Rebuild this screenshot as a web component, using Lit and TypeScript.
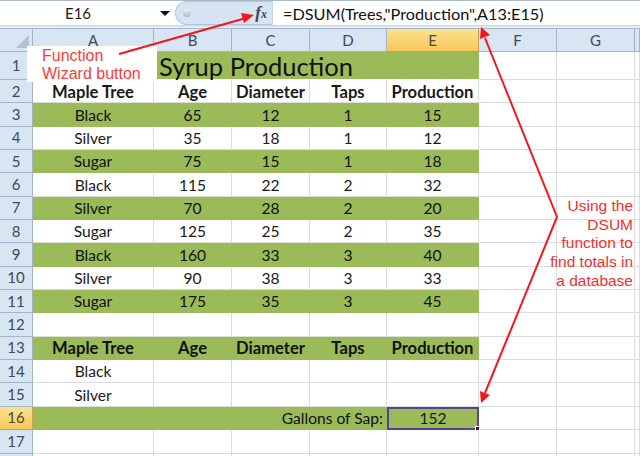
import { LitElement, html, css } from "lit";
import { customElement } from "lit/decorators.js";

const COLS = ["A", "B", "C", "D", "E", "F", "G", ""];
const DATA: string[][] = [
  ["Black", "65", "12", "1", "15"],
  ["Silver", "35", "18", "1", "12"],
  ["Sugar", "75", "15", "1", "18"],
  ["Black", "115", "22", "2", "32"],
  ["Silver", "70", "28", "2", "20"],
  ["Sugar", "125", "25", "2", "35"],
  ["Black", "160", "33", "3", "40"],
  ["Silver", "90", "38", "3", "33"],
  ["Sugar", "175", "35", "3", "45"],
];
const HEAD = ["Maple Tree", "Age", "Diameter", "Taps", "Production"];

@customElement("app-root")
export class AppRoot extends LitElement {
  static styles = css`
    :host { display: block; width: 640px; height: 456px; overflow: hidden; position: relative; background: #fff; font-family: Lato, "Open Sans", sans-serif; color: #1a1a1a; }
    .bar { display: flex; height: 25px; border-top: 1px solid #a9b8cc; box-sizing: border-box; background: #fff; }
    .name { width: 175px; display: flex; align-items: center; position: relative; box-sizing: border-box; padding-left: 65px; font-size: 15px; }
    .caret { position: absolute; left: 160px; top: 10px; width: 0; height: 0; border: 5px solid transparent; border-top: 5px solid #111; border-bottom: 0; }
    .fxwrap { width: 98px; background: #d7e4f2; border-radius: 12px 0 0 12px; border: 1px solid #b6c6da; border-right: 1px solid #c5d2e2; box-sizing: border-box; display: flex; align-items: center; justify-content: space-between; padding: 0 5px 0 7px; }
    .knob { width: 8px; height: 8px; border-radius: 50%; background: linear-gradient(#eef3f8, #aab6c4); }
    .fx { font: italic bold 17px "Liberation Serif", serif; color: #3c4654; }
    .fx b { font-size: 12px; }
    .formula { flex: 1; font-size: 16.25px; padding-left: 10px; display: flex; align-items: center; color: #111; white-space: nowrap; }
    .gap { height: 4px; background: #e2ebf5; border-top: 1px solid #c9d6e6; border-bottom: 1px solid #a9b8cc; box-sizing: border-box; }
    .grid { display: grid; grid-template-columns: 33px 121px 78px 78px 77px 92px 78px 78px 5px; grid-template-rows: 23px 28px repeat(17, 23.35px); font-size: 15.6px; }
    .c { display: flex; align-items: center; justify-content: center; box-sizing: border-box; border-right: 1px solid #dcdcdc; border-bottom: 1px solid #dcdcdc; white-space: nowrap; min-width: 0; }
    .hd { background: #d8e5f3; border-right: 1px solid #a3b4ca; border-bottom: 1px solid #a3b4ca; color: #3c4a5c; font-size: 15px; line-height: 1; }
    .sel { background: linear-gradient(#fbe28f, #f8c858); border-right-color: #c7a04a; border-bottom-color: #c7a04a; color: #4a4a3a; }
    .corner { position: relative; }
    .tri { position: absolute; right: 3px; bottom: 3px; width: 0; height: 0; border-left: 13px solid transparent; border-bottom: 13px solid #b4c2d2; }
    .g { background: #9bbb59; border-right-color: #9bbb59; border-bottom-color: #9bbb59; color: #111; }
    .b { font-weight: 700; font-size: 16.6px; padding-top: 1px; }
    .title { grid-column: 2 / 7; background: #9bbb59; font-size: 25.5px; color: #111; border-right: 0; border-bottom: 1px solid #fff; }
    .sum { grid-column: 3 / 6; justify-content: flex-end; padding-right: 3px; }
    .total { border: 2px solid #5b3f94; position: relative; background: #9bbb59; }
    .handle { position: absolute; right: -3px; bottom: -3px; width: 5px; height: 5px; background: #222; border: 1px solid #fff; box-sizing: border-box; }
    .callout { position: absolute; left: 27px; top: 46px; width: 130px; height: 36px; background: #fff; color: #fb3b3b; font: 16px/18px "Liberation Sans", sans-serif; box-sizing: border-box; padding: 1px 0 0 15px; }
    .callout span { display: block; }
    .note { position: absolute; left: 530px; top: 197px; width: 103px; color: #f03030; font: 15.5px/18.7px "Liberation Sans", sans-serif; text-align: right; }
    svg.arrows { position: absolute; left: 0; top: 0; width: 640px; height: 456px; pointer-events: none; }
  `;

  private headRow(n: number) {
    return html`<div class="c hd">${n}</div>`;
  }

  render() {
    const blank = html`<div class="c"></div><div class="c"></div><div class="c"></div>`;
    const empties = html`<div class="c"></div><div class="c"></div><div class="c"></div><div class="c"></div>`;
    return html`
      <div class="bar">
        <div class="name">E16<i class="caret"></i></div>
        <div class="fxwrap"><i class="knob"></i><span class="fx">f<b>x</b></span></div>
        <div class="formula">=DSUM(Trees,"Production",A13:E15)</div>
      </div>
      <div class="gap"></div>
      <div class="grid">
        <div class="c hd corner"><i class="tri"></i></div>
        ${COLS.map((c) => html`<div class="c hd ${c === "E" ? "sel" : ""}">${c}</div>`)}
        ${this.headRow(1)}<div class="c title">Syrup Production</div>${blank}
        ${this.headRow(2)}${HEAD.map((h) => html`<div class="c b">${h}</div>`)}${blank}
        ${DATA.map((r, i) => html`${this.headRow(i + 3)}${r.map((v) => html`<div class="c ${i % 2 === 0 ? "g" : ""}">${v}</div>`)}${blank}`)}
        ${this.headRow(12)}<div class="c"></div>${empties}${blank}
        ${this.headRow(13)}${HEAD.map((h) => html`<div class="c b g">${h}</div>`)}${blank}
        ${this.headRow(14)}<div class="c">Black</div>${empties}${blank}
        ${this.headRow(15)}<div class="c">Silver</div>${empties}${blank}
        <div class="c hd sel">16</div><div class="c g"></div><div class="c g sum">Gallons of Sap:</div><div class="c total">152<i class="handle"></i></div>${blank}
        ${this.headRow(17)}<div class="c"></div>${empties}${blank}
        <div class="c hd"></div><div class="c"></div>${empties}${blank}
      </div>
      <div class="callout"><span>Function</span><span>Wizard button</span></div>
      <div class="note">Using the<br />DSUM<br />function to<br />find totals in<br />a database</div>
      <svg class="arrows" viewBox="0 0 640 456">
        <g fill="none" stroke="#f5161c" stroke-width="2">
          <path d="M119 54 L246 18" />
          <path d="M485 38 L557 217 L485 393" />
        </g>
        <g fill="#f5161c">
          <path d="M254 15 L241 13 L244 23 Z" />
          <path d="M481 27 L480 39 L490 35 Z" />
          <path d="M481 403 L480 391 L490 395 Z" />
        </g>
      </svg>
    `;
  }
}
